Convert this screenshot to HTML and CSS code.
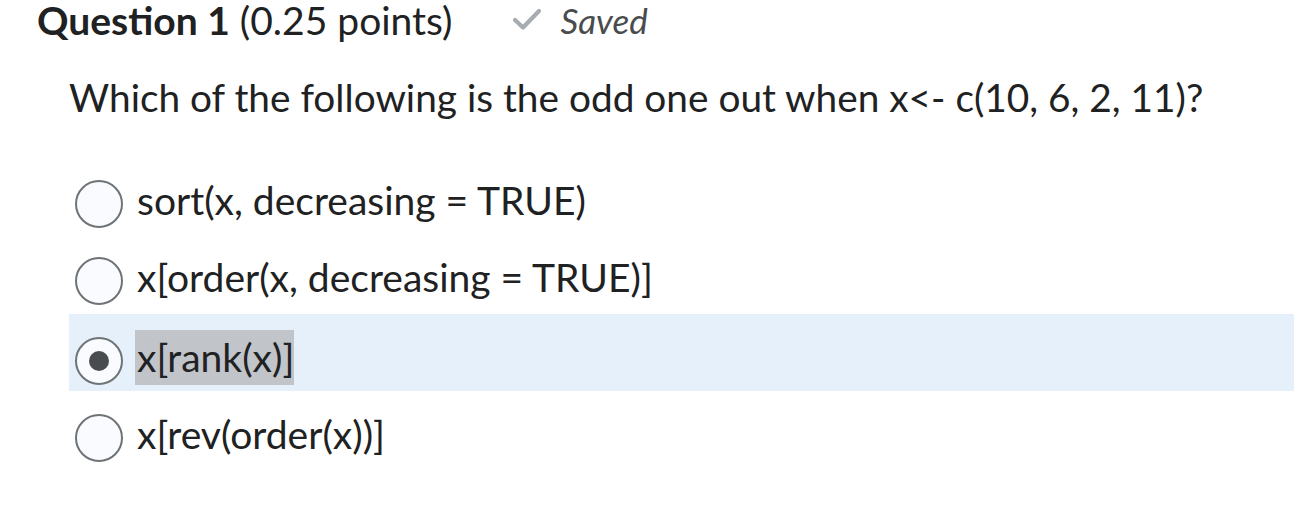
FILE: index.html
```html
<!DOCTYPE html>
<html>
<head>
<meta charset="utf-8">
<link rel="stylesheet" href="styles.css">
</head>
<body>
<div class="page">
  <div class="header">
    <h2 class="title"><strong>Question 1</strong> <span class="points">(0.25 points)</span></h2>
    <div class="saved">
      <svg class="check" width="30" height="24" viewBox="0 0 30 24"><path d="M3 13 L11 20.5 L27 4" fill="none" stroke="#a7acb1" stroke-width="4.2" stroke-linecap="round" stroke-linejoin="round"/></svg>
      <span>Saved</span>
    </div>
  </div>
  <p class="question">Which of the following is the odd one out when x&lt;- c(10, 6, 2, 11)?</p>
  <div class="options">
    <label class="option"><span class="radio"></span><span class="text">sort(x, decreasing = TRUE)</span></label>
    <label class="option second"><span class="radio"></span><span class="text">x[order(x, decreasing = TRUE)]</span></label>
    <label class="option selected"><span class="radio checked"></span><span class="text hl">x[rank(x)]</span></label>
    <label class="option"><span class="radio"></span><span class="text">x[rev(order(x))]</span></label>
  </div>
</div>
</body>
</html>
```

FILE: styles.css
```css
html, body {
  margin: 0;
  padding: 0;
  background: #ffffff;
}
body {
  font-family: Lato, "Noto Sans", sans-serif;
  color: #202122;
}
.header {
  display: flex;
  align-items: center;
  padding-left: 37px;
  height: 40px;
  gap: 59px;
}
.title {
  margin: 0;
  font-size: 39px;
  font-weight: 400;
  line-height: 40px;
  color: #202122;
  white-space: nowrap;
}
.title strong {
  font-weight: 700;
}
.saved {
  display: flex;
  align-items: center;
  gap: 19px;
  font-style: italic;
  font-size: 35px;
  line-height: 40px;
  color: #494c4e;
}
.check {
  display: block;
  margin-top: -2px;
}
.question {
  margin: 33px 0 0 69px;
  font-size: 38.8px;
  line-height: 48px;
}
.options {
  margin: 36px 0 0 69px;
  display: flex;
  flex-direction: column;
}
.option {
  box-sizing: border-box;
  display: flex;
  align-items: flex-start;
  height: 77px;
  padding: 16px 0 0 6px;
  font-size: 39px;
}
.option.second {
  height: 80px;
}
.option.selected {
  background: #e6f0fb;
}
.radio {
  box-sizing: border-box;
  width: 48px;
  height: 48px;
  margin-top: 7px;
  margin-right: 12px;
  border: 2px solid #6e7376;
  border-radius: 50%;
  background: #f9fbff;
  display: flex;
  align-items: center;
  justify-content: center;
  flex-shrink: 0;
}
.radio.checked::after {
  content: "";
  width: 20px;
  height: 20px;
  border-radius: 50%;
  background: #494c4e;
}
.text {
  line-height: 55px;
  padding-left: 2px;
}
.text.hl {
  background: #c1c4c9;
}
```
